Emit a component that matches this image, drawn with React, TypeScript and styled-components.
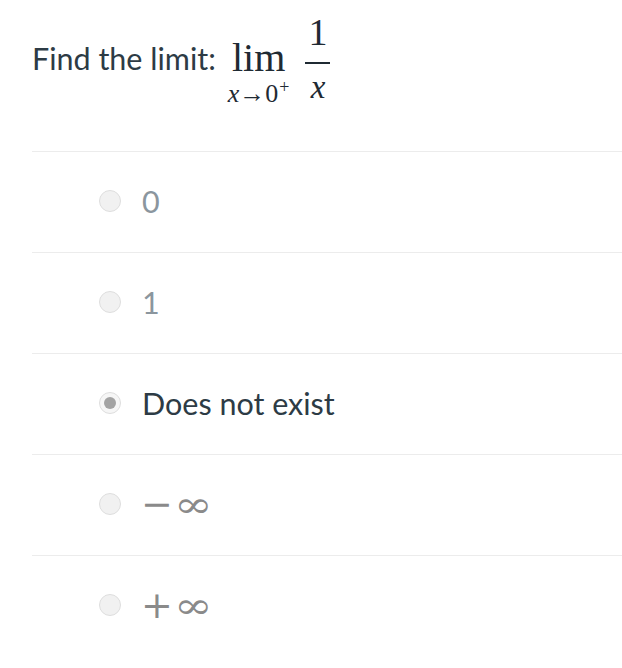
import styled, { createGlobalStyle } from 'styled-components';

const GlobalStyle = createGlobalStyle`
	html, body {
		margin: 0;
		padding: 0;
		background: #fff;
	}
	body {
		font-family: Lato, 'Noto Sans', sans-serif;
		color: #2d3b45;
	}
`;

const Page = styled.div`
	width: 622px;
`;

const Question = styled.div`
	display: flex;
	align-items: flex-start;
	height: 151px;
	padding-left: 32px;
	box-sizing: border-box;
`;

const Label = styled.span`
	margin-top: 40px;
	font-size: 30.5px;
	line-height: 36px;
	color: #2d3b45;
	white-space: nowrap;
`;

const Math = styled.span`
	display: inline-flex;
	align-items: flex-start;
	margin-left: 12px;
	font-family: 'Liberation Serif', 'DejaVu Serif', serif;
	color: #1f2a33;
`;

const Lim = styled.span`
	display: inline-flex;
	flex-direction: column;
	align-items: center;
	margin-top: 39px;
`;

const LimWord = styled.span`
	font-size: 40px;
	line-height: 38px;
`;

const Under = styled.span`
	font-size: 26px;
	line-height: 26px;
	margin-top: 4px;
	white-space: nowrap;
`;

const Var = styled.span`
	font-style: italic;
`;

const Sup = styled.span`
	display: inline-block;
	font-size: 18px;
	line-height: 18px;
	vertical-align: top;
	margin-top: -3px;
	margin-left: 1px;
`;

const Fraction = styled.span`
	display: inline-flex;
	flex-direction: column;
	align-items: center;
	margin-left: 16px;
	margin-top: 14px;
`;

const Num = styled.span`
	font-size: 38px;
	line-height: 36px;
	padding: 0 3px;
`;

const Bar = styled.span`
	align-self: stretch;
	height: 2px;
	background: #1f2a33;
	margin: 12px 0 8px;
`;

const Den = styled.span`
	font-style: italic;
	font-size: 33px;
	line-height: 30px;
	padding: 0 2px;
`;

const Options = styled.div`
	margin-left: 32px;
`;

const Option = styled.div`
	display: flex;
	align-items: center;
	height: 101px;
	border-top: 1px solid #ececec;
	padding-left: 67px;
	padding-bottom: 2px;
	box-sizing: border-box;
`;

const Radio = styled.span<{ $checked?: boolean }>`
	position: relative;
	width: 20px;
	height: 20px;
	border-radius: 50%;
	border: 1px solid #dedede;
	background: ${(p) => (p.$checked ? '#f6f6f6' : '#f1f1f1')};
	flex-shrink: 0;

	&::after {
		content: '';
		display: ${(p) => (p.$checked ? 'block' : 'none')};
		position: absolute;
		top: 4px;
		left: 4px;
		width: 12px;
		height: 12px;
		border-radius: 50%;
		background: #a3a3a3;
	}
`;

const OptionText = styled.span<{ $checked?: boolean }>`
	margin-left: 21px;
	font-size: 30.5px;
	line-height: 36px;
	color: ${(p) => (p.$checked ? '#2d3b45' : '#8b969e')};
`;

const MathText = styled.span`
	margin-left: 20px;
	display: inline-flex;
	align-items: center;
	font-family: 'DejaVu Serif', 'Liberation Serif', serif;
	font-size: 38px;
	line-height: 40px;
	color: #8a8a8a;
`;

const Infinity = styled.span`
	display: inline-block;
	transform: scale(1.6, 1.25);
	transform-origin: left center;
	margin-left: 1px;
	margin-right: 16px;
	font-size: 29px;
`;

const options = [
	{ id: 'a', text: '0' },
	{ id: 'b', text: '1' },
	{ id: 'c', text: 'Does not exist', checked: true },
	{ id: 'd', sign: '\u2212' },
	{ id: 'e', sign: '+' },
];

export default function App() {
	return (
		<>
			<GlobalStyle />
			<Page>
				<Question>
					<Label>Find the limit:</Label>
					<Math>
						<Lim>
							<LimWord>lim</LimWord>
							<Under>
								<Var>x</Var>→0<Sup>+</Sup>
							</Under>
						</Lim>
						<Fraction>
							<Num>1</Num>
							<Bar />
							<Den>x</Den>
						</Fraction>
					</Math>
				</Question>
				<Options>
					{options.map((o) => (
						<Option key={o.id}>
							<Radio $checked={o.checked} />
							{o.sign ? (
								<MathText>
									{o.sign}
									<Infinity>∞</Infinity>
								</MathText>
							) : (
								<OptionText $checked={o.checked}>{o.text}</OptionText>
							)}
						</Option>
					))}
				</Options>
			</Page>
		</>
	);
}
